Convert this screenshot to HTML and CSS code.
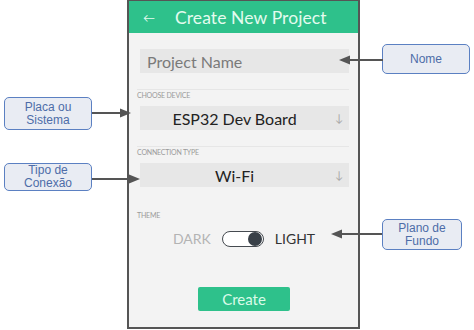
FILE: index.html
```html
<!DOCTYPE html>
<html lang="en">

<head>
    <meta charset="UTF-8"/>
    <meta content="width=device-width, initial-scale=1.0" name="viewport"/>
    <title>Create New Project</title>
    <link rel="stylesheet" href="styles.css">
</head>

<body>
    <div class="page">
        <!-- legendas da esquerda -->
        <div class="side left">
            <div class="note note-placa">Placa ou<br/>Sistema</div>
            <div class="note note-tipo">Tipo de<br/>Conexão</div>
        </div>

        <!-- tela do app -->
        <div class="phone">
            <div class="header">
                <span class="back">&larr;</span>
                <span class="title">Create New Project</span>
            </div>
            <div class="body">
                <div class="field name">Project Name</div>
                <div class="group">
                    <p class="label">CHOOSE DEVICE</p>
                    <div class="field select">ESP32 Dev Board<span class="caret">&darr;</span></div>
                </div>
                <div class="group">
                    <p class="label">CONNECTION TYPE</p>
                    <div class="field select">Wi-Fi<span class="caret">&darr;</span></div>
                </div>
                <div class="group theme">
                    <p class="label">THEME</p>
                    <div class="theme-row">
                        <span class="dark">DARK</span>
                        <span class="toggle"><span class="knob"></span></span>
                        <span class="light">LIGHT</span>
                    </div>
                </div>
                <button class="create">Create</button>
            </div>
        </div>

        <!-- legendas da direita -->
        <div class="side right">
            <div class="note note-nome">Nome</div>
            <div class="note note-plano">Plano de<br/>Fundo</div>
        </div>

        <!-- setas por cima da tela -->
        <svg class="arrows" width="474" height="330" viewBox="0 0 474 330">
            <g stroke="#555" stroke-width="2" fill="none">
                <line x1="383" y1="60" x2="348" y2="60"/>
                <line x1="92" y1="113" x2="124" y2="113"/>
                <line x1="92" y1="179" x2="132" y2="179"/>
                <line x1="382" y1="234" x2="340" y2="234"/>
            </g>
            <g fill="#555">
                <polygon points="339,60 350,55.5 350,64.5"/>
                <polygon points="131,113 120,108.5 120,117.5"/>
                <polygon points="140,179 129,174.5 129,183.5"/>
                <polygon points="331,234 342,229.5 342,238.5"/>
            </g>
        </svg>
    </div>
</body>

</html>
```

FILE: styles.css
```css
* {
    margin: 0;
    padding: 0;
    box-sizing: border-box;
}

body {
    background: #fff;
    font-family: Lato, "Open Sans", sans-serif;
}

.page {
    position: relative;
    width: 474px;
    height: 330px;
    display: flex;
    overflow: hidden;
}

.side {
    display: flex;
    flex-direction: column;
}

.side.left {
    width: 127px;
    padding-left: 4px;
}

.side.right {
    flex: 1;
    padding-left: 22px;
}

.note {
    width: 88px;
    background: #e9ecf3;
    border: 1.5px solid #5b80c2;
    border-radius: 5px;
    color: #4d6ca8;
    font: 12px/13px "Liberation Sans", Arial, sans-serif;
    text-align: center;
    display: flex;
    align-items: center;
    justify-content: center;
}

.note-placa {
    margin-top: 97px;
    height: 33px;
}

.note-tipo {
    margin-top: 33px;
    height: 28px;
}

.note-nome {
    margin-top: 44px;
    height: 30px;
}

.note-plano {
    margin-top: 145px;
    height: 31px;
    width: 80px;
}

.phone {
    width: 233px;
    height: 329px;
    border: 2px solid #555;
    border-top-width: 1px;
    background: #f3f3f3;
    display: flex;
    flex-direction: column;
}

.header {
    height: 32px;
    background: #2ec18b;
    color: #e4fbef;
    display: flex;
    align-items: center;
}

.header .back {
    width: 46px;
    padding-left: 14px;
    font-size: 12px;
}

.header .title {
    font-size: 17.5px;
    letter-spacing: 0.1px;
}

.body {
    flex: 1;
    padding: 0 9px 0 8px;
    display: flex;
    flex-direction: column;
}

.field {
    height: 24px;
    margin-left: 3px;
    background: #e7e7e7;
    display: flex;
    align-items: center;
    font-size: 16px;
    position: relative;
}

.field.name {
    margin-top: 16px;
    padding-left: 7px;
    color: #7a7a7a;
}

.group {
    margin-top: 16px;
    border-top: 1px solid #e6e6e6;
    padding-top: 1px;
}

.label {
    font-size: 7px;
    letter-spacing: -0.2px;
    color: #9a9a9a;
    height: 15px;
    line-height: 8px;
}

.field.select {
    justify-content: center;
    color: #222;
    padding-right: 20px;
}

.caret {
    position: absolute;
    right: 6px;
    top: 5px;
    font-size: 11px;
    color: #aaa;
}

.theme {
    margin-top: 23px;
    border-top: none;
}

.theme-row {
    display: flex;
    align-items: center;
    justify-content: center;
    margin-top: 4px;
    font-size: 14px;
    gap: 11px;
    padding-left: 2px;
}

.theme-row .dark {
    color: #b3b3b3;
}

.theme-row .light {
    color: #333;
}

.toggle {
    width: 42px;
    height: 16px;
    border: 1.5px solid #454a50;
    border-radius: 8px;
    background: #fff;
    display: flex;
    justify-content: flex-end;
    align-items: center;
    padding-right: 1px;
}

.knob {
    width: 14px;
    height: 14px;
    border-radius: 50%;
    background: #394048;
}

.create {
    align-self: center;
    margin-top: 40px;
    margin-left: 2px;
    width: 92px;
    height: 24px;
    border: none;
    border-radius: 2px;
    background: #2ec18b;
    color: #dafbe9;
    font: 15px Lato, "Open Sans", sans-serif;
}

.arrows {
    position: absolute;
    left: 0;
    top: 0;
    pointer-events: none;
}
```
